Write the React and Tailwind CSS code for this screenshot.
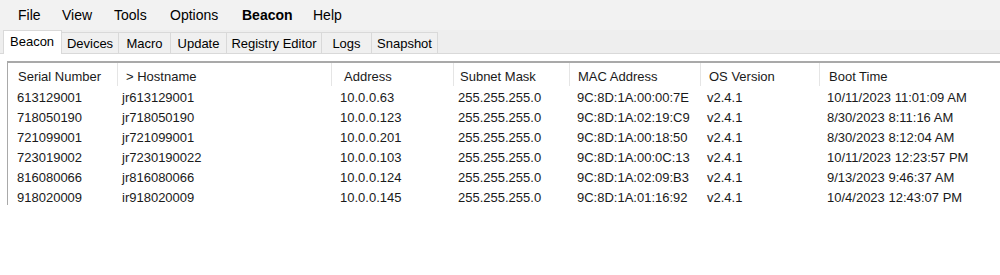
import React from "react";

const menus = [
  { label: "File", w: "w-[44px]" },
  { label: "View", w: "w-[52px]" },
  { label: "Tools", w: "w-[56px]" },
  { label: "Options", w: "w-[72px]" },
  { label: "Beacon", w: "w-[71px]", bold: true },
  { label: "Help", w: "w-[50px]" },
];

const tabs = [
  { label: "Devices", w: "w-[57px]" },
  { label: "Macro", w: "w-[52px]" },
  { label: "Update", w: "w-[56px]" },
  { label: "Registry Editor", w: "w-[95px]" },
  { label: "Logs", w: "w-[50px]" },
  { label: "Snapshot", w: "w-[66px]" },
];

const cols = [
  { h: "Serial Number", hp: "pl-[10px]", dp: "pl-[9px]" },
  { h: "> Hostname", hp: "pl-[8px]", dp: "pl-[5px]" },
  { h: "Address", hp: "pl-[12px]", dp: "pl-[9px]" },
  { h: "Subnet Mask", hp: "pl-[6px]", dp: "pl-[5px]" },
  { h: "MAC Address", hp: "pl-[8px]", dp: "pl-[8px]" },
  { h: "OS Version", hp: "pl-[8px]", dp: "pl-[7px]" },
  { h: "Boot Time", hp: "pl-[9px]", dp: "pl-[8px]" },
];

const rows = [
  ["613129001", "jr613129001", "10.0.0.63", "255.255.255.0", "9C:8D:1A:00:00:7E", "v2.4.1", "10/11/2023 11:01:09 AM"],
  ["718050190", "jr718050190", "10.0.0.123", "255.255.255.0", "9C:8D:1A:02:19:C9", "v2.4.1", "8/30/2023 8:11:16 AM"],
  ["721099001", "jr721099001", "10.0.0.201", "255.255.255.0", "9C:8D:1A:00:18:50", "v2.4.1", "8/30/2023 8:12:04 AM"],
  ["723019002", "jr7230190022", "10.0.0.103", "255.255.255.0", "9C:8D:1A:00:0C:13", "v2.4.1", "10/11/2023 12:23:57 PM"],
  ["816080066", "jr816080066", "10.0.0.124", "255.255.255.0", "9C:8D:1A:02:09:B3", "v2.4.1", "9/13/2023 9:46:37 AM"],
  ["918020009", "ir918020009", "10.0.0.145", "255.255.255.0", "9C:8D:1A:01:16:92", "v2.4.1", "10/4/2023 12:43:07 PM"],
];

const grid = "grid grid-cols-[109px_214px_122px_116px_131px_119px_1fr]";

export default function App() {
  return (
    <div
      className="w-[1000px] h-[275px] bg-white overflow-hidden text-black"
      style={{ fontFamily: '"Liberation Sans", Arial, sans-serif' }}
    >
      <div className="h-[205px] overflow-hidden flex flex-col">
        {/* Menu bar */}
        <div className="h-[30px] bg-[#f2f2f2] flex items-center pl-[18px] text-[14px] shrink-0">
          {menus.map((m) => (
            <div key={m.label} className={`${m.w} ${m.bold ? "font-bold" : ""}`}>
              {m.label}
            </div>
          ))}
        </div>
        {/* Tab strip */}
        <div className="h-[24px] bg-[#eeeeee] flex items-end pl-[3px] border-b border-[#d9d9d9] shrink-0 text-[13px]">
          <div className="w-[59px] h-[24px] bg-white border border-b-0 border-[#d9d9d9] flex items-center pl-[6px] pb-px -mb-px relative">
            Beacon
          </div>
          {tabs.map((t) => (
            <div
              key={t.label}
              className={`${t.w} h-[21px] bg-[#f0f0f0] border border-l-0 border-b-0 border-[#d9d9d9] flex items-center justify-center pt-[2px]`}
            >
              {t.label}
            </div>
          ))}
        </div>
        {/* Tab page */}
        <div className="flex-1 bg-white pt-[7px] pl-[7px]">
          <div className="h-full border-t-2 border-l border-[#a9a9a9] text-[13px] text-[#1a1a1a]">
            <div className={`${grid} h-[25px] items-start`}>
              {cols.map((c, i) => (
                <div
                  key={c.h}
                  className={`${c.hp} h-[23px] pt-[4px] flex items-center ${i > 0 ? "border-l border-[#e5e5e5]" : ""} whitespace-nowrap`}
                >
                  {c.h}
                </div>
              ))}
            </div>
            {rows.map((r) => (
              <div key={r[0]} className={`${grid} h-[20px] items-center`}>
                {r.map((v, i) => (
                  <div key={i} className={`${cols[i].dp} whitespace-nowrap`}>
                    {v}
                  </div>
                ))}
              </div>
            ))}
          </div>
        </div>
      </div>
    </div>
  );
}
